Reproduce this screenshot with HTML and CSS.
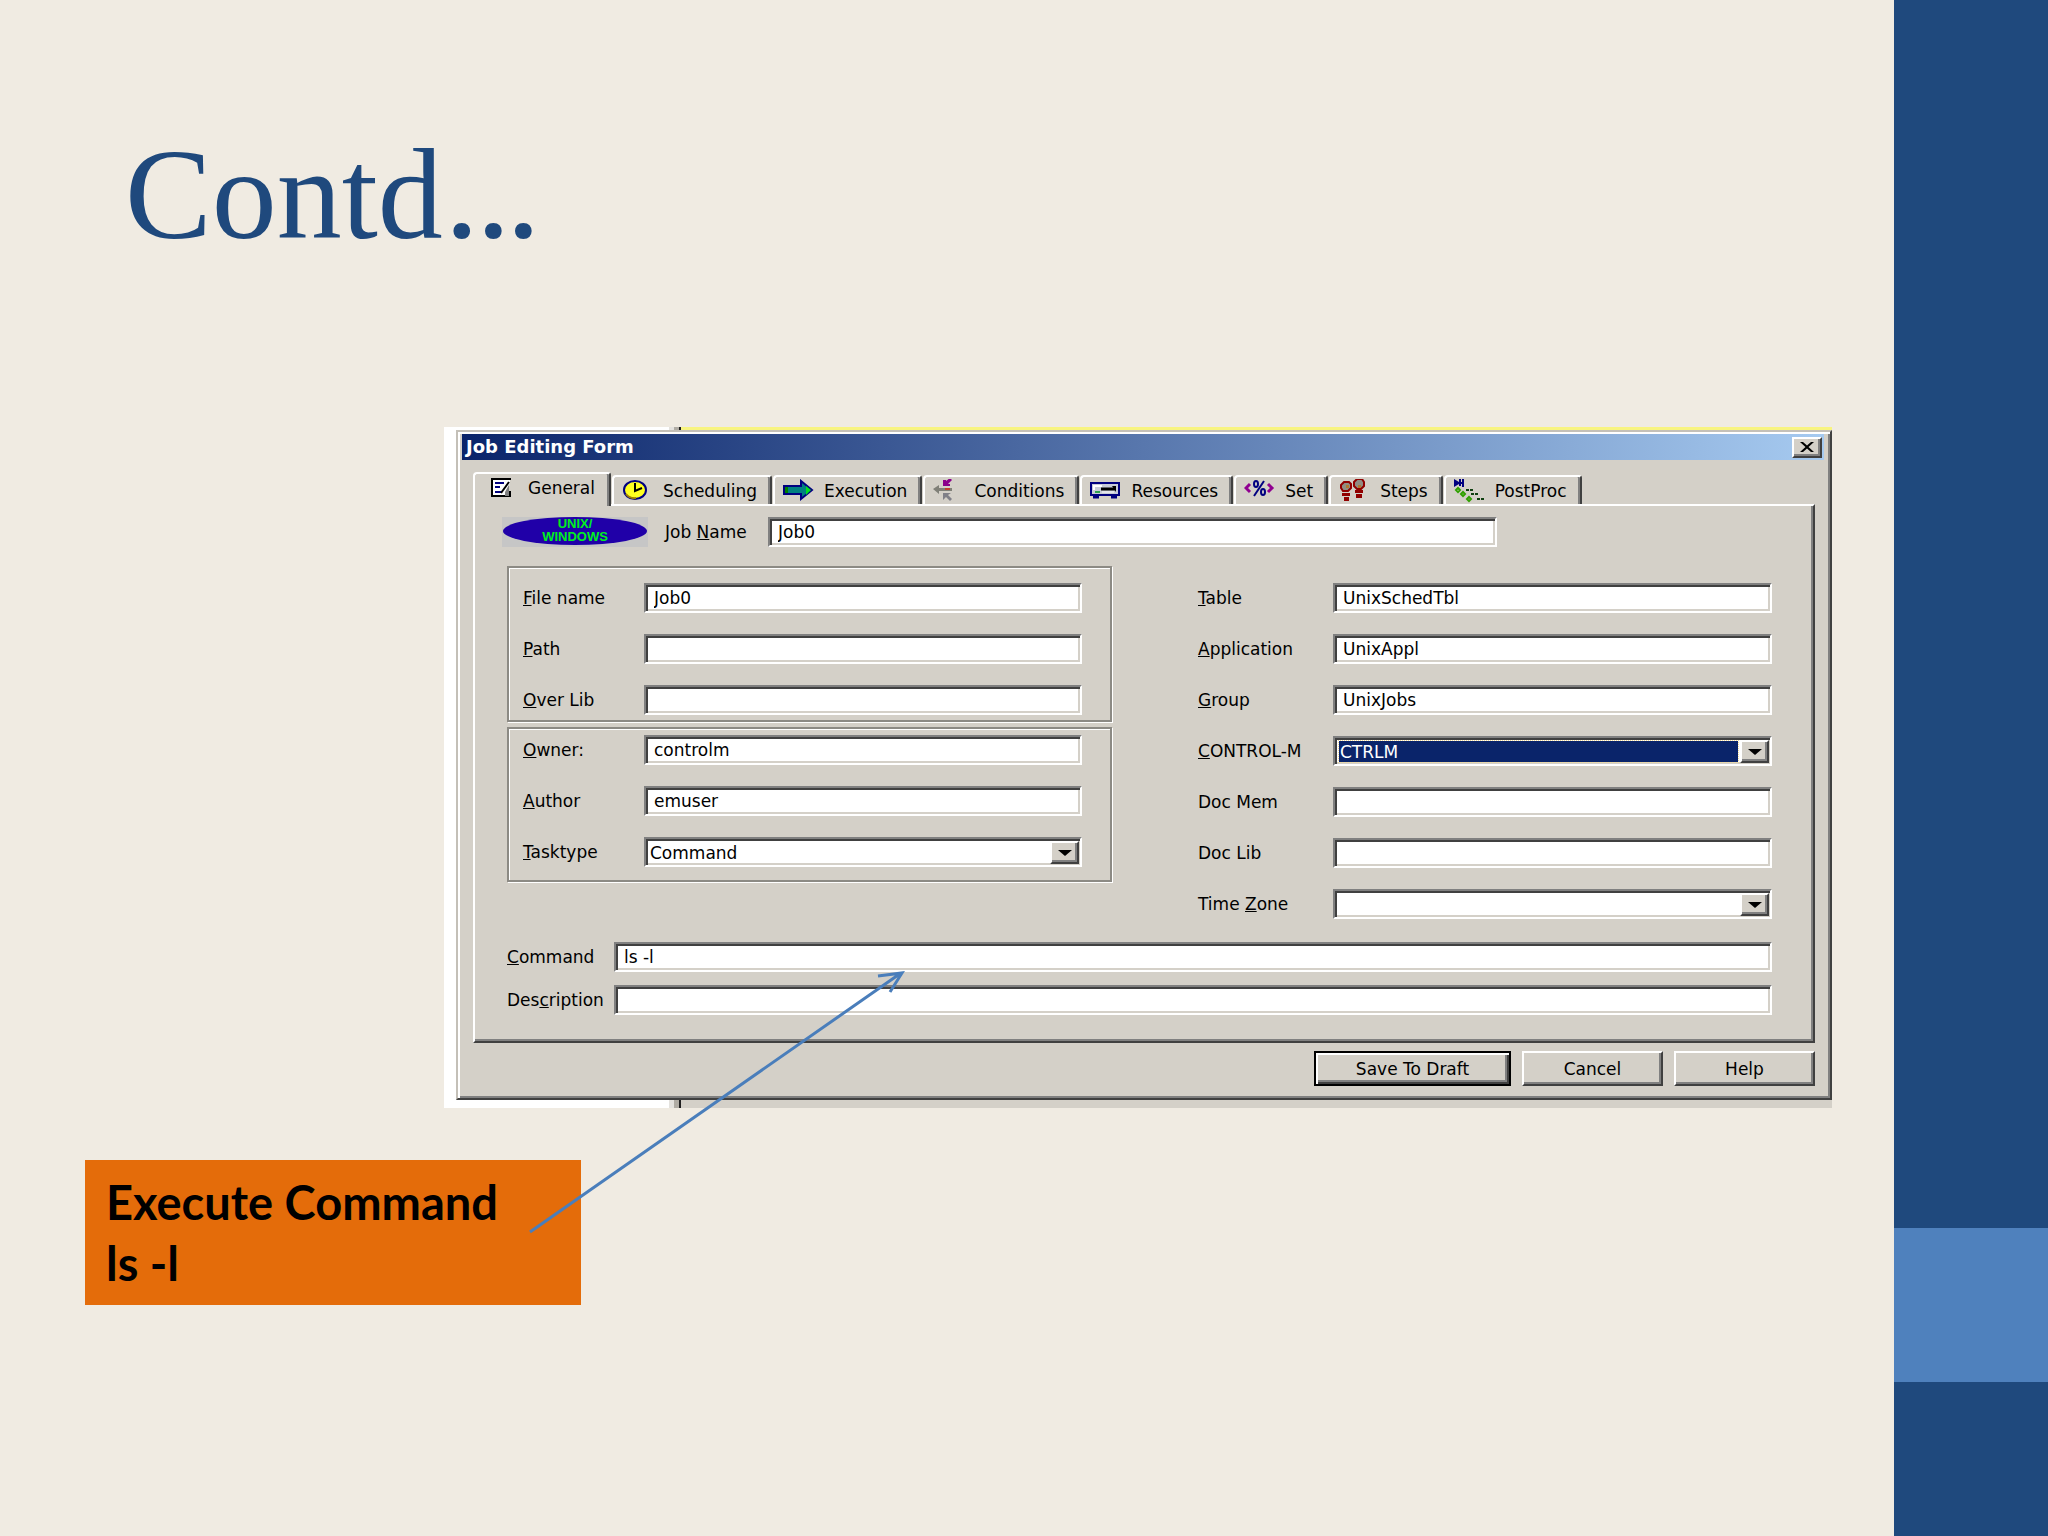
FILE: index.html
```html
<!DOCTYPE html>
<html lang="en">
<head>
  <meta charset="UTF-8">
  <meta name="viewport" content="width=device-width, initial-scale=1.0">
  <title>Contd…</title>
  <link rel="stylesheet" href="styles.css">
</head>
<body>

  <main class="slide">
    <h1 class="slide-title">Contd<span class="dots">…</span></h1>

    <!-- Job editing dialog, with the window behind it showing at the edges -->
    <div class="backdrop">
      <form class="dialog">
        <div class="title-bar">
          <h2>Job Editing Form</h2>
          <button type="button" class="close" aria-label="Close">
            <svg viewBox="0 0 16 12" width="16" height="12"><path d="M1 1h3l4 3.500 4-3.500h3l-5.500 5 5.500 5h-3l-4-3.500-4 3.500h-3l5.500-5z"/></svg>
          </button>
        </div>

        <div class="tabs" role="tablist">
          <button type="button" role="tab" class="tab active" aria-selected="true">
            <svg viewBox="0 0 32 24">
              <path d="M5 3h18v4l-4 14H5z" fill="#fff"/>
              <path d="M24 3H5v17h18v-5" fill="none" stroke="#000" stroke-width="2"/>
              <path d="M8 7h9M8 11h5M8 16h7" stroke="#000080" stroke-width="2"/>
              <path d="M22 6l-8 11" stroke="#000" stroke-width="2"/>
              <path d="M23 7l-5 9v4h4V9z" fill="#808080"/>
            </svg>
            General
          </button>
          <button type="button" role="tab" class="tab">
            <svg viewBox="0 0 32 24">
              <ellipse cx="13" cy="11" rx="11" ry="9" fill="#ffff20" stroke="#000080" stroke-width="2"/>
              <path d="M4 15q4 5 10 4" fill="none" stroke="#a08000" stroke-width="2"/>
              <path d="M13 4v8l7-3" fill="none" stroke="#000" stroke-width="2"/>
            </svg>
            Scheduling
          </button>
          <button type="button" role="tab" class="tab">
            <svg viewBox="0 0 32 24">
              <path d="M1 7h17V2l11 9-11 9v-5H1z" fill="#008080" stroke="#000080" stroke-width="2"/>
              <path d="M2 8h3v6H2z" fill="#008000"/>
              <path d="M23 7l5 4-5 5z" fill="#00e020"/>
            </svg>
            Execution
          </button>
          <button type="button" role="tab" class="tab">
            <svg viewBox="0 0 32 24">
              <path d="M10 1h3v1l4-3 2 2-4 4h2v2h-7z" fill="#8b008b"/>
              <path d="M0 10l6-4v3h13v3H6v3z" fill="#808078"/>
              <path d="M12 10h5" stroke="#c04030" stroke-width="2"/>
              <path d="M10 14h8l-3 2 4 4-2 2-4-4-3 3z" fill="#808088"/>
            </svg>
            Conditions
          </button>
          <button type="button" role="tab" class="tab">
            <svg viewBox="0 0 32 24">
              <path d="M1 4h28v12H1z" fill="#c8ccd8" stroke="#000080" stroke-width="2"/>
              <path d="M3 18h6M21 18h6" stroke="#000080" stroke-width="3"/>
              <path d="M4 11V7h8" fill="none" stroke="#fff" stroke-width="2"/>
              <path d="M11 10h14" stroke="#000" stroke-width="3"/>
              <path d="M22 7h4v6z" fill="#000"/>
              <path d="M5 13h5" stroke="#30a050" stroke-width="2"/>
              <path d="M12 13h12" stroke="#fff"/>
            </svg>
            Resources
          </button>
          <button type="button" role="tab" class="tab">
            <svg viewBox="0 0 32 24">
              <path d="M6 5l-4 4 4 4M24 5l4 4-4 4" fill="none" stroke="#900090" stroke-width="3"/>
              <path d="M20 2L10 17" stroke="#000080" stroke-width="2"/>
              <ellipse cx="12" cy="5" rx="2" ry="3" fill="none" stroke="#000080" stroke-width="2"/>
              <ellipse cx="19" cy="13" rx="2" ry="3" fill="none" stroke="#000080" stroke-width="2"/>
            </svg>
            Set
          </button>
          <button type="button" role="tab" class="tab">
            <svg viewBox="0 0 32 24">
              <path d="M2 6l3-3h5l2 2v4l-3 3H4l-2-3zM15 3l3-3h5l2 3v4l-3 3h-4l-3-3z" fill="#908c84" stroke="#900000" stroke-width="2"/>
              <path d="M7 6h3v3H7zM19 6h3v3h-3z" fill="#b07830"/>
              <path d="M3 14h8v3H3zM5 18h5v4H5zM16 11h8v3h-8zM17 15h6v4h-6z" fill="#900000"/>
            </svg>
            Steps
          </button>
          <button type="button" role="tab" class="tab">
            <svg viewBox="0 0 32 24">
              <path d="M0 0l5 3V0h2v7H5V5L0 8zM7 3h3v2H7zM8 0h2v8H8z" fill="#000080"/>
              <path d="M4 9l2 2-2 2-2-2zM9 13l2 2-2 2-2-2zM15 18l2 2-2 2-2-2z" fill="none" stroke="#30a000" stroke-width="2"/>
              <path d="M12 11h7M17 15h7M23 20h7" stroke="#104010" stroke-width="2" stroke-dasharray="3 1"/>
            </svg>
            PostProc
          </button>
        </div>

        <div class="panel">
          <div class="job-row">
            <svg class="logo" viewBox="0 0 146 30" role="img" aria-label="Unix/Windows">
              <ellipse cx="73" cy="14" rx="72" ry="14"/>
              <text x="73" y="11">UNIX/</text>
              <text x="73" y="24">WINDOWS</text>
            </svg>
            <label for="job-name">Job <u>N</u>ame</label>
            <input type="text" id="job-name" value="Job0">
          </div>

          <div class="columns">
            <div class="left">
              <fieldset class="group group-file">
                <div class="field"><label for="file-name"><u>F</u>ile name</label><input type="text" id="file-name" value="Job0"></div>
                <div class="field"><label for="path"><u>P</u>ath</label><input type="text" id="path"></div>
                <div class="field"><label for="over-lib"><u>O</u>ver Lib</label><input type="text" id="over-lib"></div>
              </fieldset>
              <fieldset class="group group-owner">
                <div class="field"><label for="owner"><u>O</u>wner:</label><input type="text" id="owner" value="controlm"></div>
                <div class="field"><label for="author"><u>A</u>uthor</label><input type="text" id="author" value="emuser"></div>
                <div class="field">
                  <label for="tasktype"><u>T</u>asktype</label>
                  <div class="combo">
                    <select id="tasktype"><option>Command</option></select>
                    <span class="arrow"></span>
                  </div>
                </div>
              </fieldset>
            </div>

            <div class="right">
              <div class="field"><label for="table"><u>T</u>able</label><input type="text" id="table" value="UnixSchedTbl"></div>
              <div class="field"><label for="application"><u>A</u>pplication</label><input type="text" id="application" value="UnixAppl"></div>
              <div class="field"><label for="group"><u>G</u>roup</label><input type="text" id="group" value="UnixJobs"></div>
              <div class="field">
                <label for="control-m"><u>C</u>ONTROL-M</label>
                <div class="combo selected">
                  <select id="control-m"><option>CTRLM</option></select>
                  <span class="arrow"></span>
                </div>
              </div>
              <div class="field"><label for="doc-mem">Doc Mem</label><input type="text" id="doc-mem"></div>
              <div class="field"><label for="doc-lib">Doc Lib</label><input type="text" id="doc-lib"></div>
              <div class="field">
                <label for="time-zone">Time <u>Z</u>one</label>
                <div class="combo">
                  <select id="time-zone"><option></option></select>
                  <span class="arrow"></span>
                </div>
              </div>
            </div>
          </div>

          <div class="wide">
            <div class="field"><label for="command"><u>C</u>ommand</label><input type="text" id="command" value="ls -l"></div>
            <div class="field"><label for="description">Des<u>c</u>ription</label><input type="text" id="description"></div>
          </div>
        </div>

        <div class="buttons">
          <button type="button" class="btn default">Save To Draft</button>
          <button type="button" class="btn">Cancel</button>
          <button type="button" class="btn">Help</button>
        </div>
      </form>
    </div>

    <!-- Callout with the arrow to the Command field -->
    <div class="callout">
      Execute Command<br>ls -l
      <svg class="pointer" viewBox="0 0 380 266" width="380" height="266">
        <path d="M2 263L373 4M350 7L374 4L362 23"/>
      </svg>
    </div>
  </main>

  <aside class="stripe"><div class="stripe-accent"></div></aside>

</body>
</html>
```
FILE: styles.css
```css
* {
  box-sizing: border-box;
}
body {
  margin: 0;
  min-height: 100vh;
  display: grid;
  grid-template-columns: 1fr 154px;
  background-color: #f0ebe2;
  color: #000;
  font-family: "DejaVu Sans", sans-serif;
  font-size: 17px;
}
.slide {
  padding: 120px 62px 0 85px;
}
.slide-title {
  margin: 0 0 159px 40px;
  color: #1f497d;
  font-family: "Liberation Serif", serif;
  font-size: 130px;
  font-weight: normal;
  line-height: 148px;
}
.dots {
  font-family: Roboto, sans-serif;
  font-size: 148px;
  line-height: 1px;
}

/* Right stripe */
.stripe {
  display: flex;
  flex-direction: column;
  justify-content: flex-end;
  padding-bottom: 154px;
  background-color: #1f497d;
}
.stripe-accent {
  height: 154px;
  background-color: #4f81bd;
}

/* Window behind the dialog */
.backdrop {
  margin-left: 359px;
  padding: 3px 0 8px 12px;
  background:
    linear-gradient(#f8f480, #f8f480) 237px 0 / 100% 3px no-repeat,
    linear-gradient(90deg, #fff 225px, #e4e2de 225px, #e4e2de 230px, #b0aca4 230px, #b0aca4 235px, #202020 235px, #202020 237px, #d4d0c8 237px);
}
.dialog {
  padding: 2px 6px 12px 4px;
  background-color: #d4d0c8;
  border: 2px solid #404040;
  border-top-color: #c4c0b8;
  border-left-color: #c4c0b8;
  box-shadow: inset 2px 2px #fff, inset -2px -2px #808080;
}
.title-bar {
  display: flex;
  align-items: center;
  justify-content: space-between;
  height: 26px;
  padding: 0 2px 0 4px;
  background: linear-gradient(90deg, #0a246a, #a6caf0);
}
.title-bar h2 {
  margin: 0;
  color: #fff;
  font-size: 18px;
  line-height: 26px;
}

button {
  color: #000;
  font: inherit;
  background-color: #d4d0c8;
}
.close,
.btn,
.arrow {
  border: 2px solid #404040;
  border-top-color: #fff;
  border-left-color: #fff;
  box-shadow: inset -2px -2px #808080;
}
.close {
  display: flex;
  align-items: center;
  justify-content: center;
  width: 30px;
  height: 21px;
  padding: 0;
}

/* Tabs */
.tabs {
  display: flex;
  align-items: flex-end;
  height: 32px;
  margin: 12px 0 0 11px;
}
.tab {
  display: flex;
  align-items: center;
  gap: 9px;
  height: 29px;
  padding: 0 13px 0 8px;
  border: 2px solid #fff;
  border-right: 2px solid #404040;
  border-bottom: 0;
  border-radius: 4px 3px 0 0;
  box-shadow: inset -2px 0 #808080;
}
.tab + .tab {
  margin-left: 1px;
}
.tab svg {
  width: 32px;
  height: 24px;
}
.tab.active {
  position: relative;
  height: 34px;
  margin-bottom: -2px;
  padding: 0 14px 4px 12px;
}
.panel {
  margin: 0 9px 0 11px;
  padding: 11px 41px 26px 32px;
  border: 2px solid #404040;
  border-top-color: #fff;
  border-left-color: #fff;
  box-shadow: inset -2px -2px #808080;
}

/* Fields */
input,
.combo {
  flex: 1;
  min-width: 0;
  height: 30px;
  background-color: #fff;
  border: 2px solid #fff;
  border-top-color: #808080;
  border-left-color: #808080;
  box-shadow: inset 2px 2px #404040, inset -2px -2px #d4d0c8;
}
input {
  padding: 0 8px;
  font: inherit;
}
.field {
  display: flex;
  align-items: center;
}
.field label {
  flex: none;
  width: 121px;
}
.field + .field {
  margin-top: 21px;
}
.combo {
  display: flex;
  padding: 2px 1px 1px 3px;
}
.combo select {
  flex: 1;
  min-width: 0;
  padding: 0 1px;
  color: #000;
  font: inherit;
  appearance: none;
  background-color: transparent;
  border: 0;
}
.combo.selected select {
  margin: 1px 2px 1px 1px;
  color: #fff;
  background-color: #0a246a;
  outline: 1px dotted #f5db95;
}
.arrow {
  display: flex;
  align-items: center;
  justify-content: center;
  width: 29px;
  background-color: #d4d0c8;
  pointer-events: none;
}
.arrow::before {
  content: "";
  border: 7px solid transparent;
  border-top: 6px solid #000;
  border-bottom: 0;
}

.job-row {
  display: flex;
  align-items: center;
  margin: 0 275px 19px -5px;
}
.job-row label {
  width: 103px;
}
.logo {
  width: 146px;
  height: 30px;
  margin-right: 17px;
  background-color: #c6c6c6;
}
.logo ellipse {
  fill: #2000a8;
}
.logo text {
  fill: #00f020;
  font-size: 13px;
  font-family: "Liberation Sans", sans-serif;
  font-weight: bold;
  text-anchor: middle;
}
.columns {
  display: grid;
  grid-template-columns: 605fr 574fr;
  gap: 86px;
}
.group {
  margin: 0 0 5px;
  border: 2px solid #8c8a84;
  box-shadow: 1px 1px #fff, inset 1px 1px #fff;
}
.group-file {
  padding: 15px 28px 5px 14px;
}
.group-owner {
  padding: 6px 28px 13px 14px;
}
.right {
  padding-top: 17px;
}
.right .field label {
  width: 135px;
}
.wide {
  margin-top: 23px;
}
.wide .field label {
  width: 107px;
}
.wide .field + .field {
  margin-top: 13px;
}

/* Dialog buttons */
.buttons {
  display: flex;
  justify-content: flex-end;
  gap: 11px;
  margin: 8px 9px 0 0;
}
.btn {
  width: 141px;
  height: 35px;
  padding: 0;
}
.btn.default {
  width: 197px;
  border-color: #000;
  box-shadow: inset 2px 2px #fff, inset -2px -2px #404040, inset -4px -4px #808080;
}

/* Callout */
.callout {
  position: relative;
  width: 496px;
  margin-top: 52px;
  padding: 12px 21px 11px;
  color: #000;
  background-color: #e46c0a;
  font-family: Lato, sans-serif;
  font-size: 47px;
  font-weight: bold;
  line-height: 61px;
}
.pointer {
  position: absolute;
  left: 443px;
  bottom: 70px;
  fill: none;
  stroke: #4a7ebb;
  stroke-width: 3;
}
```
